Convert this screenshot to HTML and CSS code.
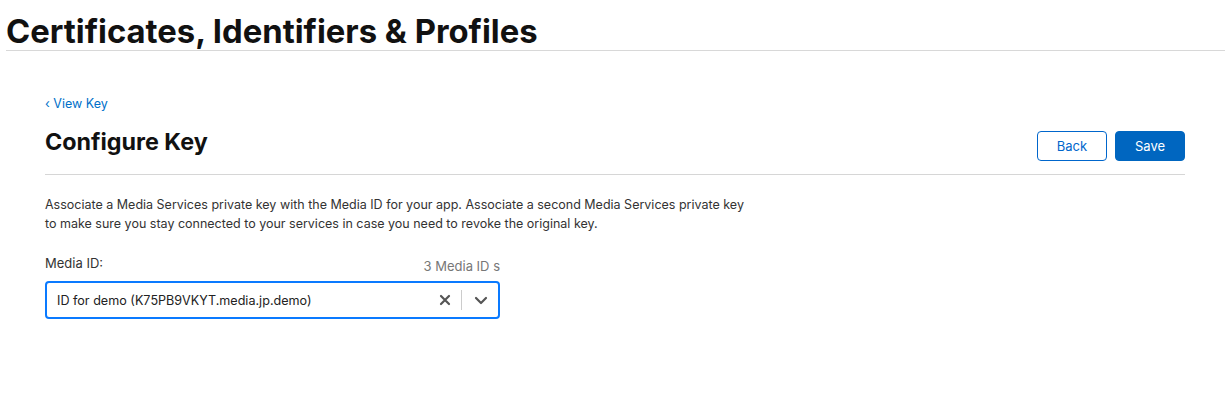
FILE: index.html
```html
<!DOCTYPE html>
<html>
<head>
<meta charset="utf-8">
<link rel="stylesheet" href="styles.css">
</head>
<body>
<header class="top">
  <h1 class="site-title">Certificates, Identifiers &amp; Profiles</h1>
</header>
<main class="content">
  <a class="back-link" href="#">‹ View Key</a>
  <div class="page-head">
    <h2 class="page-title">Configure Key</h2>
    <div class="actions">
      <button class="btn btn-outline">Back</button>
      <button class="btn btn-primary">Save</button>
    </div>
  </div>
  <p class="desc">Associate a Media Services private key with the Media ID for your app. Associate a second Media Services private key<br>to make sure you stay connected to your services in case you need to revoke the original key.</p>
  <div class="field">
    <div class="field-head">
      <label class="field-label">Media ID:</label>
      <span class="field-count">3 Media ID s</span>
    </div>
    <div class="select">
      <span class="select-value">ID for demo (K75PB9VKYT.media.jp.demo)</span>
      <span class="select-clear">
        <svg width="12" height="12" viewBox="0 0 12 12"><path d="M2 2 L10 10 M10 2 L2 10" stroke="#555" stroke-width="2.2" stroke-linecap="round"/></svg>
      </span>
      <span class="select-sep"></span>
      <span class="select-arrow">
        <svg width="14" height="10" viewBox="0 0 14 10"><path d="M2 3 L7 8 L12 3" fill="none" stroke="#555" stroke-width="2.2" stroke-linecap="round" stroke-linejoin="round"/></svg>
      </span>
    </div>
  </div>
</main>
</body>
</html>
```
FILE: styles.css
```css
html, body { margin: 0; padding: 0; background: #fff; }
body { font-family: Inter, "Noto Sans", sans-serif; color: #1d1d1f; }
.top { margin-left: 6px; border-bottom: 1px solid #d8d8d8; height: 51px; box-sizing: border-box; padding-top: 11px; }
.site-title { margin: 0; font-size: 32.8px; font-weight: 700; line-height: 40px; color: #111; }
.content { margin: 0 40px 0 45px; padding-top: 45px; }
.back-link { display: block; font-size: 12.5px; color: #0070c9; text-decoration: none; line-height: 16px; }
.page-head { display: flex; align-items: center; justify-content: space-between; border-bottom: 1px solid #d6d6d6; padding: 19px 0 13px; }
.page-title { margin: 0; font-size: 23.3px; font-weight: 700; color: #111; line-height: 30px; position: relative; top: -4px; }
.actions { display: flex; gap: 8px; }
.btn { font-family: inherit; font-size: 13px; width: 70px; height: 30px; border-radius: 4px; cursor: pointer; }
.btn-outline { background: #fff; border: 1px solid #0066cc; color: #0066cc; }
.btn-primary { background: #0066c0; border: 1px solid #0066c0; color: #fff; }
.desc { font-size: 12.5px; line-height: 19px; color: #333; margin: 20px 0 0; }
.field { width: 455px; margin-top: 22px; }
.field-head { display: flex; justify-content: space-between; align-items: baseline; }
.field-label { font-size: 13px; color: #333; }
.field-count { font-size: 13px; color: #777; position: relative; top: 3px; }
.select { margin-top: 10px; height: 38px; box-sizing: border-box; border: 2px solid #0a7aff; border-radius: 4px; display: flex; align-items: center; padding-left: 10px; }
.select-value { flex: 1; font-size: 12.6px; color: #222; }
.select-clear { width: 20px; display: flex; justify-content: center; }
.select-sep { width: 1px; height: 20px; background: #ccc; margin: 0 9px 0 6px; }
.select-arrow { width: 20px; display: flex; justify-content: center; margin-right: 7px; }
```
